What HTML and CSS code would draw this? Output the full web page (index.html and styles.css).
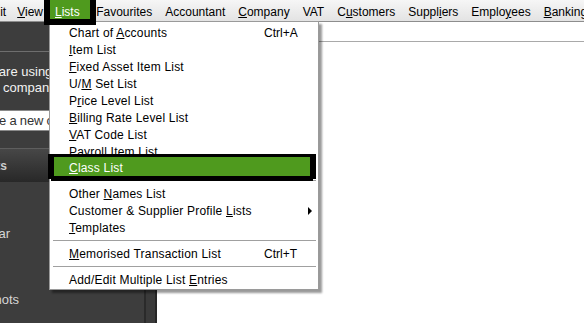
FILE: index.html
```html
<!DOCTYPE html>
<html lang="en">
<head>
    <meta charset="UTF-8">
    <meta name="viewport" content="width=device-width, initial-scale=1.0">
    <title>Lists Menu</title>
    <link rel="stylesheet" href="styles.css">
</head>
<body>
    <div class="app">
        <div class="menubar">
            <span class="mb-item mb-first">Edit</span>
            <span class="mb-item"><u>V</u>iew</span>
            <span class="mb-item open"><u>L</u>ists</span>
            <span class="mb-item">Favourites</span>
            <span class="mb-item">Accountant</span>
            <span class="mb-item"><u>C</u>ompany</span>
            <span class="mb-item">VAT</span>
            <span class="mb-item">C<u>u</u>stomers</span>
            <span class="mb-item">Suppl<u>i</u>ers</span>
            <span class="mb-item">Emplo<u>y</u>ees</span>
            <span class="mb-item"><u>B</u>anking</span>
        </div>

        <div class="workspace">
            <aside class="sidebar">
                <div class="sb-top"></div>
                <div class="sb-notice">
                    <p class="sb-line sb-line1">You are using a sample</p>
                    <p class="sb-line sb-line2">company file</p>
                </div>
                <div class="sb-search">Create a new company</div>
                <div class="sb-head">
                    <span class="clip clip-head"><span>My Shortcuts</span></span>
                </div>
                <div class="sb-links">
                    <div class="sb-link"><span class="clip clip-none"><span>Home</span></span></div>
                    <div class="sb-link"><span class="clip clip-cal"><span>Calendar</span></span></div>
                    <div class="sb-link"><span class="clip clip-none"><span>To Do</span></span></div>
                    <div class="sb-link"><span class="clip clip-snap"><span>Snapshots</span></span></div>
                </div>
            </aside>
            <div class="splitter"></div>
            <main class="main">
                <div class="toolbar"></div>
            </main>
        </div>

        <!-- Lists dropdown -->
        <div class="dropdown">
            <div class="dd-item"><span>Chart of <u>A</u>ccounts</span><span class="dd-key">Ctrl+A</span></div>
            <div class="dd-item"><span><u>I</u>tem List</span></div>
            <div class="dd-item"><span><u>F</u>ixed Asset Item List</span></div>
            <div class="dd-item"><span>U/<u>M</u> Set List</span></div>
            <div class="dd-item"><span>P<u>r</u>ice Level List</span></div>
            <div class="dd-item"><span><u>B</u>illing Rate Level List</span></div>
            <div class="dd-item"><span><u>V</u>AT Code List</span></div>
            <div class="dd-item"><span>Payroll Item List</span></div>
            <div class="dd-item active"><span><u>C</u>lass List</span></div>
            <div class="dd-sep"></div>
            <div class="dd-item"><span>Other <u>N</u>ames List</span></div>
            <div class="dd-item"><span>Customer &amp; Supplier Profile <u>L</u>ists</span><span class="dd-arrow"></span></div>
            <div class="dd-item"><span><u>T</u>emplates</span></div>
            <div class="dd-sep"></div>
            <div class="dd-item"><span><u>M</u>emorised Transaction List</span><span class="dd-key">Ctrl+T</span></div>
            <div class="dd-sep"></div>
            <div class="dd-item"><span>Add/Edit Multiple List <u>E</u>ntries</span></div>
        </div>
    </div>
</body>
</html>
```

FILE: styles.css
```css
body {
    margin: 0;
    font-family: "Liberation Sans", Arial, sans-serif;
    font-size: 12px;
    background: #fff;
    overflow: hidden;
}

.app {
    width: 584px;
    height: 323px;
    display: flex;
    flex-direction: column;
    position: relative;
    overflow: hidden;
}

/* menu bar */
.menubar {
    height: 21px;
    flex-shrink: 0;
    display: flex;
    align-items: flex-start;
    white-space: nowrap;
    background: linear-gradient(#f6f6f6, #e3e3e3);
    border-bottom: 1px solid #8d8d8d;
}

.mb-item {
    padding: 5px 6.5px 0;
    line-height: 14px;
    color: #000;
}

.mb-first {
    margin-left: -21px;
    padding-right: 4.5px;
}

.mb-item.open {
    background: #4f9a1e;
    color: #fff;
    padding-left: 5.5px;
    padding-right: 10px;
    outline: 6px solid #000;
    position: relative;
    z-index: 3;
}

/* body */
.workspace {
    flex: 1;
    display: flex;
    min-height: 0;
}

.sidebar {
    width: 144px;
    flex-shrink: 0;
    background: #3d3d3d;
    border-right: 2px solid #2a2a2a;
    color: #d6d6d6;
    font-size: 13px;
    overflow: hidden;
    white-space: nowrap;
}

.sb-top {
    height: 29px;
    border-bottom: 1px solid #6e6e6e;
}

.sb-notice {
    padding-top: 12px;
    color: #f2f2f2;
}

.sb-line {
    margin: 0;
    line-height: 16px;
}

.sb-line1 {
    margin-left: -26.7px;
}

.sb-line2 {
    margin-left: 3px;
}

.sb-search {
    margin: 14px 6px 0 -40px;
    height: 19px;
    line-height: 19px;
    padding-left: 7.2px;
    background: #fff;
    border: 1px solid #8a8a8a;
    color: #333;
    letter-spacing: -0.2px;
}

.sb-head {
    margin-top: 17px;
    height: 33px;
    border-top: 1px solid #5e5e5e;
    background: linear-gradient(#474747, #282828);
    display: flex;
    align-items: center;
    font-size: 12px;
    font-weight: bold;
    color: #cdcdcd;
}

.clip {
    display: flex;
    justify-content: flex-end;
}

.clip-head { width: 7px; }
.clip-none { width: 0; }
.clip-cal { width: 10px; }
.clip-snap { width: 19px; }

.sb-links {
    padding-top: 2px;
}

.sb-link {
    height: 33px;
    display: flex;
    align-items: center;
}

.splitter {
    width: 9px;
    flex-shrink: 0;
    background: #3a3a3a;
    border-right: 2px solid #262626;
}

.main {
    flex: 1;
    background: #fff;
}

.toolbar {
    height: 19px;
    border-bottom: 1px solid #a9a9a9;
}

/* dropdown */
.dropdown {
    position: absolute;
    left: 49px;
    top: 21px;
    width: 268px;
    padding: 2px 0 1px;
    background: #fff;
    border: 1px solid #9a9a9a;
    box-shadow: 3px 3px 2px rgba(0,0,0,0.4);
    letter-spacing: 0.2px;
    white-space: nowrap;
    z-index: 2;
}

.dd-item {
    box-sizing: border-box;
    height: 17px;
    line-height: 15px;
    padding: 2px 0 0 19px;
    display: flex;
    align-items: flex-start;
    color: #000;
}

.dd-key {
    margin-left: auto;
    width: 54px;
    letter-spacing: 0;
}

.dd-arrow {
    margin: 3px 6px 0 auto;
    border-left: 4px solid #000;
    border-top: 4px solid transparent;
    border-bottom: 4px solid transparent;
}

.dd-item.active {
    height: 19px;
    margin: -3px 8px 1px 4px;
    padding: 4px 0 0 15px;
    background: #4f9a1e;
    color: #fff;
    position: relative;
    z-index: 1;
    box-shadow: 0 0 0 3px #000, -3px 0 0 3px #000, 3px 0 0 3px #000, 0 2px 0 3px #000;
}

.dd-sep {
    height: 1px;
    margin: 4px 2px 4px 3px;
    background: #a0a0a0;
}
```
